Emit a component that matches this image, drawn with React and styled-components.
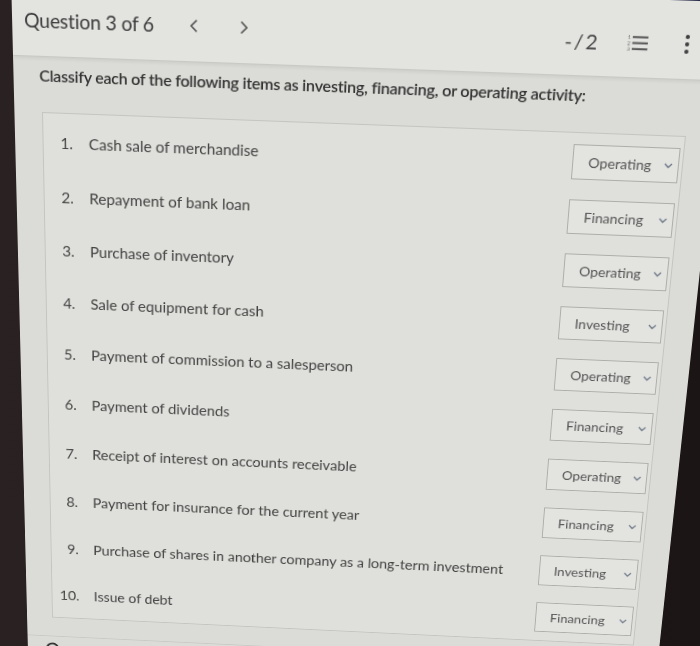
import React from 'react';
import styled, { createGlobalStyle } from 'styled-components';

// the reference is a photo of a screen, so the flat page is projected
// onto the photographed quad with one homography
const flatCorners = [[28, 192], [672, 192], [672, 742], [28, 742]];
const photoCorners = [[42, 112], [686, 136], [634, 643], [52, 615]];

function homography(src, dst) {
    const A = [];
    const B = [];
    for (let i = 0; i < 4; i++) {
        const [x, y] = src[i];
        const [u, v] = dst[i];
        A.push([x, y, 1, 0, 0, 0, -x * u, -y * u]);
        B.push(u);
        A.push([0, 0, 0, x, y, 1, -x * v, -y * v]);
        B.push(v);
    }
    const n = 8;
    for (let c = 0; c < n; c++) {
        let p = c;
        for (let r = c + 1; r < n; r++) if (Math.abs(A[r][c]) > Math.abs(A[p][c])) p = r;
        [A[c], A[p]] = [A[p], A[c]];
        [B[c], B[p]] = [B[p], B[c]];
        for (let r = 0; r < n; r++) {
            if (r === c) continue;
            const f = A[r][c] / A[c][c];
            for (let k = c; k < n; k++) A[r][k] -= f * A[c][k];
            B[r] -= f * B[c];
        }
    }
    const [a, b, c, d, e, f, g, h] = B.map((val, i) => val / A[i][i]);
    return `matrix3d(${a},${d},0,${g},${b},${e},0,${h},0,0,1,0,${c},${f},0,1)`;
}

const screenMatrix = homography(flatCorners, photoCorners);

const GlobalStyle = createGlobalStyle`
    html, body {
        margin: 0;
        padding: 0;
        background: #1e1818;
    }
`;

const Root = styled.div`
    width: 700px;
    height: 646px;
    overflow: hidden;
    position: relative;
    background: linear-gradient(90deg, #2a2222 0%, #1b1515 100%);
    font-family: "Lato", "Open Sans", "Liberation Sans", sans-serif;
`;

const Screen = styled.div`
    width: 700px;
    height: 860px;
    background: #dbdbd7;
    transform-origin: 0 0;
    transform: ${p => p.$matrix};
    display: flex;
    flex-direction: column;
`;

const TopBar = styled.div`
    height: 63px;
    background: #1d2040;
    flex-shrink: 0;
`;

const Header = styled.header`
    height: 75px;
    box-sizing: border-box;
    padding: 5px 34px 0 12px;
    display: flex;
    align-items: center;
    background: #e3e3e0;
    border-bottom: 1px solid #c8c8c4;
    box-shadow: 0 2px 3px rgba(0, 0, 0, 0.06);
    flex-shrink: 0;
`;

const Title = styled.h1`
    margin: 0;
    font-size: 19.3px;
    font-weight: 400;
    color: #3a3a3a;
    letter-spacing: -0.2px;
`;

const Chevron = styled.svg`
    width: 9px;
    height: 14px;
    margin-left: ${p => p.$gap}px;
`;

const HeaderRight = styled.div`
    margin-left: auto;
    display: flex;
    align-items: center;
    padding-top: 3px;
`;

const Score = styled.span`
    font-size: 20px;
    color: #444;
    letter-spacing: 2px;
`;

const ListIcon = styled.svg`
    width: 21px;
    height: 17px;
    margin-left: 27px;
`;

const Kebab = styled.div`
    margin-left: 35px;
    display: flex;
    flex-direction: column;
    gap: 3px;

    span {
        width: 4px;
        height: 4px;
        border-radius: 50%;
        background: #3f3f3f;
    }
`;

const Heading = styled.h2`
    margin: 8px 0 0;
    padding-left: 26px;
    font-size: 16.1px;
    line-height: 20px;
    font-weight: 600;
    color: #333;
    letter-spacing: -0.25px;
`;

const Card = styled.section`
    margin: 26px 0 0 28px;
    width: 644px;
    box-sizing: border-box;
    padding-top: 1px;
    border: 1px solid #c4c4c0;
    background: #dfdfdb;
`;

const Row = styled.div`
    height: 55px;
    display: flex;
    align-items: center;
`;

const Num = styled.span`
    width: 30px;
    text-align: right;
    font-size: 15.6px;
    color: #454545;
`;

const Label = styled.span`
    margin-left: 16px;
    font-size: 15.6px;
    color: #434343;
`;

const Select = styled.div`
    margin-left: auto;
    margin-right: 3px;
    width: 106px;
    height: 35px;
    box-sizing: border-box;
    border: 1px solid #adadaa;
    background: #e3e3e0;
    display: flex;
    align-items: center;
    padding: 0 5px 0 15px;
`;

const SelectText = styled.span`
    font-size: 14.2px;
    color: #555;
`;

const Caret = styled.svg`
    width: 9px;
    height: 6px;
    margin-left: auto;
`;

const Footer = styled.div`
    margin-top: 22px;
    border-top: 1px solid #c9c9c5;
    padding: 7px 0 0 20px;
`;

const items = [
    ['Cash sale of merchandise', 'Operating'],
    ['Repayment of bank loan', 'Financing'],
    ['Purchase of inventory', 'Operating'],
    ['Sale of equipment for cash', 'Investing'],
    ['Payment of commission to a salesperson', 'Operating'],
    ['Payment of dividends', 'Financing'],
    ['Receipt of interest on accounts receivable', 'Operating'],
    ['Payment for insurance for the current year', 'Financing'],
    ['Purchase of shares in another company as a long-term investment', 'Investing'],
    ['Issue of debt', 'Financing'],
];

const App = () => {
    return (
        <Root>
            <GlobalStyle />
            <Screen $matrix={screenMatrix}>
                <TopBar />
                <Header>
                    <Title>Question 3 of 6</Title>
                    <Chevron $gap={35} viewBox="0 0 9 14">
                        <polyline points="7.5,1.5 2,7 7.5,12.5" fill="none" stroke="#555" strokeWidth="1.6" />
                    </Chevron>
                    <Chevron $gap={41} viewBox="0 0 9 14">
                        <polyline points="1.5,1.5 7,7 1.5,12.5" fill="none" stroke="#555" strokeWidth="1.6" />
                    </Chevron>
                    <HeaderRight>
                        <Score>-/2</Score>
                        <ListIcon viewBox="0 0 22 18">
                            <text x="0" y="5" fontSize="5" fill="#555" fontFamily="Lato, sans-serif">1</text>
                            <text x="0" y="11" fontSize="5" fill="#555" fontFamily="Lato, sans-serif">2</text>
                            <text x="0" y="17" fontSize="5" fill="#555" fontFamily="Lato, sans-serif">3</text>
                            <line x1="5" y1="3" x2="21" y2="3" stroke="#555" strokeWidth="2" />
                            <line x1="5" y1="9" x2="21" y2="9" stroke="#555" strokeWidth="2" />
                            <line x1="5" y1="15" x2="21" y2="15" stroke="#555" strokeWidth="2" />
                        </ListIcon>
                        <Kebab><span /><span /><span /></Kebab>
                    </HeaderRight>
                </Header>
                <Heading>Classify each of the following items as investing, financing, or operating activity:</Heading>
                <Card>
                    {items.map(([label, value], i) => (
                        <Row key={label}>
                            <Num>{i + 1}.</Num>
                            <Label>{label}</Label>
                            <Select>
                                <SelectText>{value}</SelectText>
                                <Caret viewBox="0 0 9 6">
                                    <polyline points="1,1 4.5,4.5 8,1" fill="none" stroke="#6b7785" strokeWidth="1.3" />
                                </Caret>
                            </Select>
                        </Row>
                    ))}
                </Card>
                <Footer>
                    <svg width="16" height="16" viewBox="0 0 16 16">
                        <circle cx="8" cy="8" r="6.5" fill="none" stroke="#2e2e2e" strokeWidth="2.2" />
                    </svg>
                </Footer>
            </Screen>
        </Root>
    );
};

export default App;
